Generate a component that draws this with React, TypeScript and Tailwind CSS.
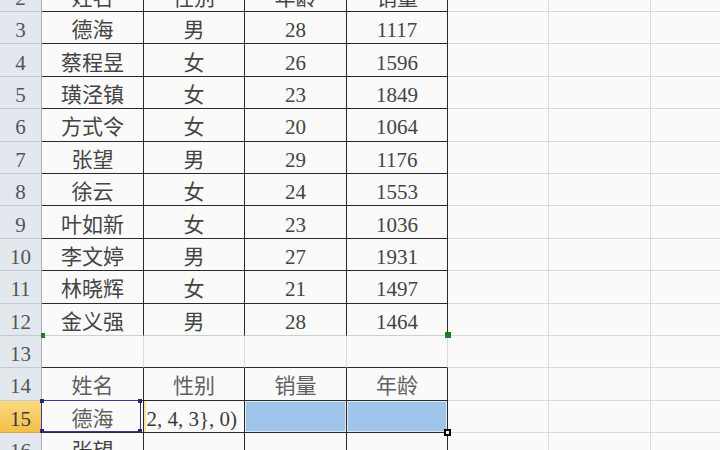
// Excel-style sheet fragment: rows 2–16, source table A2:D12 and a lookup
// block A14:D16 where C15:D15 is selected and B15 shows a formula tail.

type Row = { n: number; cells: string[] }

const rows: Row[] = [
  { n: 2, cells: ['姓名', '性别', '年龄', '销量'] },
  { n: 3, cells: ['德海', '男', '28', '1117'] },
  { n: 4, cells: ['蔡程昱', '女', '26', '1596'] },
  { n: 5, cells: ['璜泾镇', '女', '23', '1849'] },
  { n: 6, cells: ['方式令', '女', '20', '1064'] },
  { n: 7, cells: ['张望', '男', '29', '1176'] },
  { n: 8, cells: ['徐云', '女', '24', '1553'] },
  { n: 9, cells: ['叶如新', '女', '23', '1036'] },
  { n: 10, cells: ['李文婷', '男', '27', '1931'] },
  { n: 11, cells: ['林晓辉', '女', '21', '1497'] },
  { n: 12, cells: ['金义强', '男', '28', '1464'] },
  { n: 13, cells: ['', '', '', ''] },
  { n: 14, cells: ['姓名', '性别', '销量', '年龄'] },
  { n: 15, cells: ['德海', '', '', ''] },
  { n: 16, cells: ['张望', '', '', ''] },
]

const colWidths = ['w-[102px]', 'w-[101px]', 'w-[102px]', 'w-[101px]', 'w-[101px]', 'w-[102px]']

const inTable = (n: number) => (n >= 2 && n <= 12) || n >= 14

function rightBorder(n: number, c: number) {
  if (c <= 3 && inTable(n)) return 'border-r-[#2a2a2a]'
  return 'border-r-[#d8dadc]'
}

function bottomBorder(n: number, c: number) {
  if (c > 3) return 'border-b-[#d8dadc]'
  if (n === 12) return 'border-b-[#c9d2c9]'
  if ((n >= 2 && n <= 11) || n >= 13) return 'border-b-[#2a2a2a]'
  return 'border-b-[#d8dadc]'
}

const serif = "font-['Liberation_Serif','Noto_Sans_CJK_SC',serif]"

function Cell({ n, c, text }: { n: number; c: number; text: string }) {
  const selected = n === 15 && (c === 2 || c === 3)
  return (
    <div
      className={`relative flex h-full shrink-0 items-center justify-center border-r border-b pt-[6px] ${colWidths[c]} ${rightBorder(n, c)} ${bottomBorder(n, c)} ${selected ? 'bg-[#9fc5ea] shadow-[inset_0_0_0_1px_#dfe8f0]' : ''}`}
    >
      {text && (
        <span className={`text-[21px] leading-none ${n === 14 || n === 15 ? 'text-[#606060]' : 'text-[#444]'}`}>
          {text}
        </span>
      )}

      {/* formula text overflowing from the edit, clipped on the left */}
      {n === 15 && c === 1 && (
        <div className="absolute inset-0 flex items-center justify-end overflow-hidden pt-[6px] pr-[7px]">
          <span className="shrink-0 whitespace-nowrap text-[21px] leading-none text-[#3a3a3a]">
            {'{2, 4, 3}, 0)'}
          </span>
          <div className="absolute top-0 bottom-0 left-0 w-[2px] bg-[#f3e6a0]" />
        </div>
      )}

      {/* reference highlight of A15 */}
      {n === 15 && c === 0 && (
        <div className="absolute -top-[1px] -left-[1px] right-[2px] bottom-0 border border-[#3a3a8c]">
          <div className="absolute -top-[2px] -left-[2px] size-[4px] bg-[#26267a]" />
          <div className="absolute -top-[2px] -right-[2px] size-[4px] bg-[#26267a]" />
          <div className="absolute -bottom-[2px] -left-[2px] size-[4px] bg-[#26267a]" />
          <div className="absolute -bottom-[2px] -right-[2px] size-[4px] bg-[#26267a]" />
        </div>
      )}

      {/* fill handle */}
      {n === 15 && c === 3 && (
        <div className="absolute -right-[4px] -bottom-[4px] z-10 flex size-[7px] items-center justify-center bg-black">
          <div className="size-[3px] bg-white" />
        </div>
      )}

      {/* green range corners A2:D12 */}
      {n === 12 && c === 0 && (
        <div className="absolute -bottom-[3px] -left-[1px] z-10 h-[5px] w-[4px] bg-[#1e7d22]" />
      )}
      {n === 12 && c === 3 && (
        <div className="absolute -right-[4px] -bottom-[3px] z-10 size-[6px] bg-[#1e7d22]" />
      )}
    </div>
  )
}

function SheetRow({ row }: { row: Row }) {
  const active = row.n === 15
  return (
    <div className="flex h-[32.4px]">
      <div
        className={`flex h-full w-[42px] shrink-0 items-center justify-center border-r border-b pt-[6px] text-[21px] leading-none ${
          active
            ? 'border-r-[#c99a2e] border-b-[#d6a840] bg-gradient-to-b from-[#fbd97c] to-[#f2c049] text-[#3a3a3a]'
            : 'border-r-[#a8b0bb] border-b-[#c4cad3] bg-[#e3e8ee] text-[#555]'
        }`}
      >
        {row.n}
      </div>
      {[0, 1, 2, 3, 4, 5].map((c) => (
        <Cell key={c} n={row.n} c={c} text={row.cells[c] ?? ''} />
      ))}
      <div className="h-full flex-1 border-b border-b-[#d8dadc]" />
    </div>
  )
}

export default function App() {
  return (
    <div className={`h-[450px] w-[720px] overflow-hidden bg-[#fafafa] ${serif}`}>
      <div className="mt-[-20.4px]">
        {rows.map((r) => (
          <SheetRow key={r.n} row={r} />
        ))}
      </div>
    </div>
  )
}
